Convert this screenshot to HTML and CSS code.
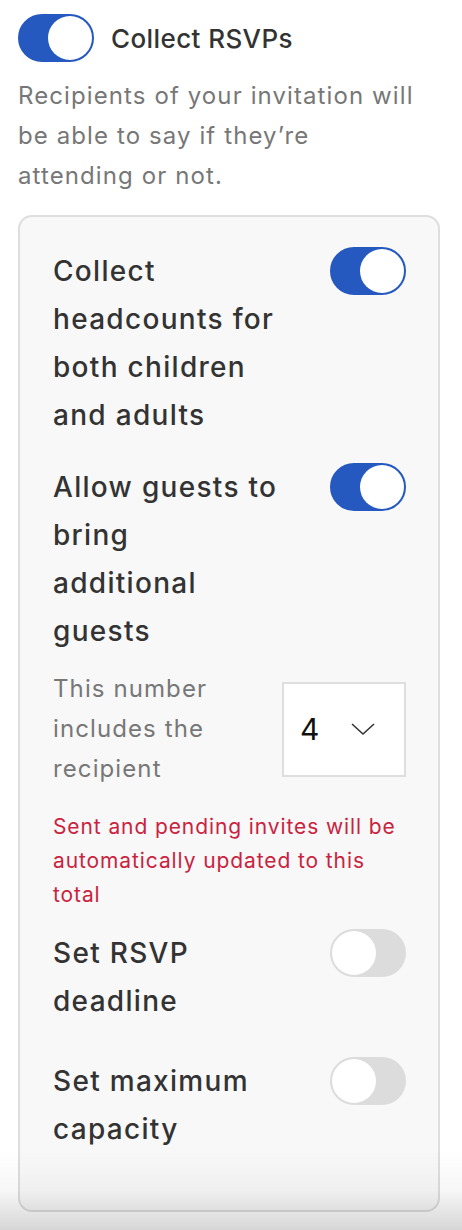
FILE: index.html
```html
<!DOCTYPE html>
<html lang="en">
<head>
<meta charset="UTF-8" />
<meta name="viewport" content="width=device-width, initial-scale=1" />
<title>RSVP settings</title>
<link rel="stylesheet" href="styles.css">
</head>
<body>

<div class="panel">
  <div class="main-option">
    <span class="switch on"><span class="knob"></span></span>
    <span class="main-label">Collect RSVPs</span>
  </div>
  <p class="main-desc">Recipients of your invitation will be able to say if they’re attending or not.</p>

  <section class="options">
    <div class="option first">
      <div class="option-label">Collect headcounts for both children and adults</div>
      <span class="switch on"><span class="knob"></span></span>
    </div>

    <div class="option second">
      <div class="option-label">Allow guests to bring additional guests</div>
      <span class="switch on"><span class="knob"></span></span>
    </div>

    <div class="guest-count">
      <div class="count-hint">This number includes the recipient</div>
      <div class="count-select">
        <span class="count-value">4</span>
        <svg class="chevron" width="26" height="16" viewBox="0 0 26 16"><path d="M2 3 L13 13 L24 3" fill="none" stroke="#333" stroke-width="1.6"/></svg>
      </div>
    </div>
    <p class="count-warning">Sent and pending invites will be automatically updated to this total</p>

    <div class="option third">
      <div class="option-label">Set RSVP deadline</div>
      <span class="switch"><span class="knob"></span></span>
    </div>

    <div class="option fourth">
      <div class="option-label">Set maximum capacity</div>
      <span class="switch"><span class="knob"></span></span>
    </div>
  </section>
</div>

<div class="footer-shade"></div>

</body>
</html>
```

FILE: styles.css
```css
* { box-sizing: border-box; margin: 0; padding: 0; }
body {
  background: #fff;
  color: #333;
  font-family: Inter, 'Noto Sans', sans-serif;
  padding: 14px 22px 0 18px;
  height: 1230px;
  overflow: hidden;
}

/* switches */
.switch {
  flex: none;
  width: 76px;
  height: 48px;
  border-radius: 24px;
  background: #dcdcdc;
  border: 2px solid #dcdcdc;
  display: flex;
  justify-content: flex-start;
}
.switch .knob {
  width: 44px;
  height: 44px;
  border-radius: 50%;
  background: #fff;
}
.switch.on {
  background: #2559c0;
  border-color: #2559c0;
  justify-content: flex-end;
}

/* top option */
.main-option {
  display: flex;
  align-items: center;
  gap: 17px;
}
.main-label {
  font-size: 26px;
  font-weight: 500;
  letter-spacing: 0.4px;
  color: #333;
}
.main-desc {
  margin-top: 14px;
  padding-right: 12px;
  font-size: 24px;
  line-height: 40px;
  letter-spacing: 1.1px;
  color: #777;
}

/* box of sub options */
.options {
  margin-top: 19px;
  background: #f8f8f8;
  border: 2px solid #dedede;
  border-radius: 14px;
  padding: 30px 32px 57px 33px;
}
.option {
  display: flex;
  align-items: flex-start;
  gap: 52px;
}
.option-label {
  flex: 1;
  font-size: 28px;
  font-weight: 500;
  line-height: 48px;
  letter-spacing: 1.3px;
  color: #333;
}
.option.second { margin-top: 24px; }
.option.third { margin-top: 17px; }
.option.fourth { margin-top: 32px; }

.guest-count {
  margin-top: 14px;
  display: flex;
  align-items: center;
  gap: 24px;
}
.count-hint {
  flex: 1;
  font-size: 24px;
  line-height: 40px;
  letter-spacing: 1.1px;
  color: #777;
}
.count-select {
  flex: none;
  width: 124px;
  height: 95px;
  background: #fff;
  border: 2px solid #dedede;
  display: flex;
  align-items: center;
  padding: 0 28px 0 16px;
  justify-content: space-between;
}
.count-value {
  font-size: 30px;
  color: #111;
}
.count-warning {
  margin-top: 21px;
  font-size: 21px;
  line-height: 34px;
  letter-spacing: 0.9px;
  color: #c9233f;
}

.footer-shade {
  position: fixed;
  left: 0;
  right: 0;
  bottom: 0;
  height: 80px;
  background: linear-gradient(to bottom, rgba(0,0,0,0) 0%, rgba(0,0,0,0.03) 50%, rgba(0,0,0,0.16) 100%);
  pointer-events: none;
}
```
